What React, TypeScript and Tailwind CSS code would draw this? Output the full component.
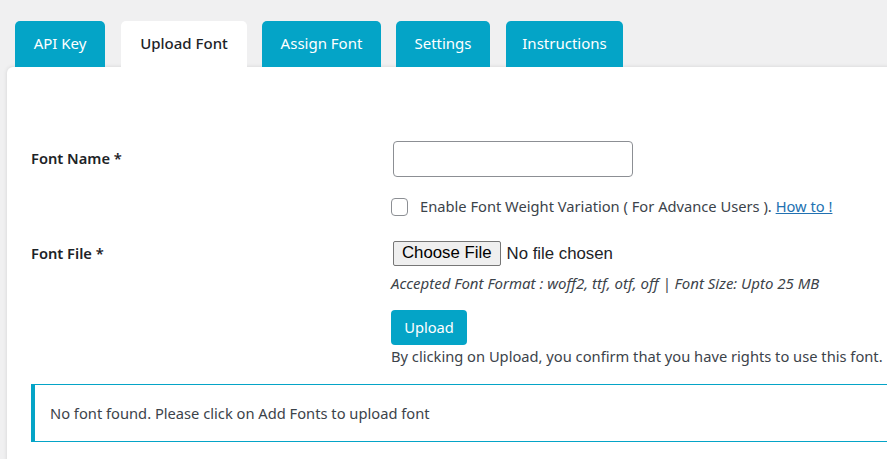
const tabs = [
  { label: "API Key", cls: "w-[90px]" },
  { label: "Upload Font", cls: "w-[126px] ml-px" },
  { label: "Assign Font", cls: "w-[119px]" },
  { label: "Settings", cls: "w-[94px]" },
  { label: "Instructions", cls: "w-[117px] ml-px" },
];

function Tab({ label, cls, active }: { label: string; cls: string; active: boolean }) {
  return (
    <div
      className={
        active
          ? `${cls} h-[46px] pb-px flex items-center justify-center rounded-t-[5px] bg-white text-[#1d2327] text-[15px] font-medium`
          : `${cls} h-[46px] pb-px flex items-center justify-center rounded-t-[5px] bg-[#04a4c7] text-white text-[15px]`
      }
    >
      {label}
    </div>
  );
}

export default function App() {
  return (
    <div
      className="w-[887px] h-[459px] overflow-hidden bg-[#f0f0f1] text-[#3c434a] text-[14.7px]"
      style={{ fontFamily: '"Noto Sans", "Open Sans", sans-serif' }}
    >
      <div className="h-[21px]" />

      <div className="flex gap-[15px] pl-[15px]">
        {tabs.map((t) => (
          <Tab key={t.label} label={t.label} cls={t.cls} active={t.label === "Upload Font"} />
        ))}
      </div>

      <div className="ml-[7px] w-[960px] bg-white rounded-tl-[6px] shadow-[0_0_4px_rgba(0,0,0,0.12)] pt-[74px] pl-[24px] pb-10">
        {/* font name */}
        <div className="flex">
          <div className="w-[360px] h-[36px] pb-[2px] flex items-center font-semibold text-[#1d2327]">Font Name *</div>
          <div className="flex flex-col">
            <input
              type="text"
              className="ml-[2px] w-[240px] h-[36px] border border-[#8c8f94] rounded-[4px] px-2 outline-none"
            />
            <label className="mt-[20px] h-[20px] pb-px flex items-center gap-[12px]">
              <span className="w-[17px] h-[18px] border border-[#8c8f94] rounded-[4px] bg-white" />
              <span>
                Enable Font Weight Variation ( For Advance Users ).{" "}
                <a href="#" className="text-[#2271b1] underline">
                  How to !
                </a>
              </span>
            </label>
          </div>
        </div>

        {/* font file */}
        <div className="flex mt-[24px]">
          <div className="w-[360px] h-[25px] pb-px flex items-center font-semibold text-[#1d2327]">Font File *</div>
          <div className="flex flex-col">
            <div
              className="flex items-center ml-[2px] text-[16.8px] text-[#000]"
              style={{ fontFamily: '"Liberation Sans", Arial, sans-serif' }}
            >
              <button className="h-[25px] px-[8px] leading-none pb-px bg-[#efefef] border border-[#767676] rounded-[2px]">
                Choose File
              </button>
              <span className="ml-[6px] text-[#1d2327]">No file chosen</span>
            </div>
            <p className="mt-[8px] h-[20px] pb-px flex items-center italic text-[15px]">
              Accepted Font Format : woff2, ttf, otf, off | Font Size: Upto 25 MB
            </p>
            <button className="mt-[16px] w-[76px] h-[35px] pb-px rounded-[4px] bg-[#04a4c7] text-white">Upload</button>
            <p className="h-[22px] flex items-end whitespace-nowrap">
              By clicking on Upload, you confirm that you have rights to use this font.
            </p>
          </div>
        </div>

        {/* notice */}
        <div className="mt-[17px] h-[58px] pb-px flex items-center border-y border-[#04a4c7] border-l-4 pl-[15px]">
          No font found. Please click on Add Fonts to upload font
        </div>
      </div>
    </div>
  );
}
